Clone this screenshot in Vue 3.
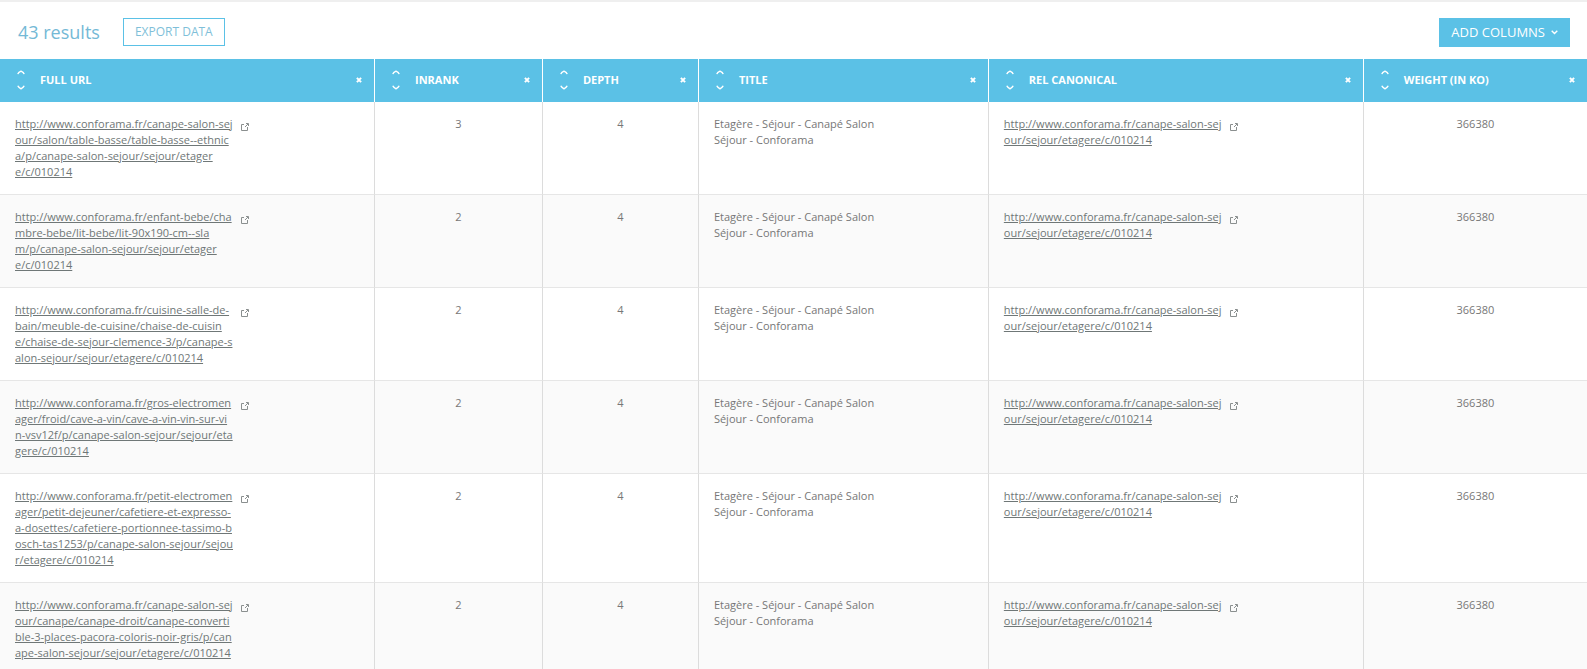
<script setup>
const columns = [
  { key: 'url', label: 'Full URL' },
  { key: 'inrank', label: 'InRank' },
  { key: 'depth', label: 'Depth' },
  { key: 'title', label: 'Title' },
  { key: 'canonical', label: 'Rel canonical' },
  { key: 'weight', label: 'Weight (in KO)' },
]

const canonical = ['http://www.conforama.fr/canape-salon-sej', 'our/sejour/etagere/c/010214']
const title = ['Etagère - Séjour - Canapé Salon', 'Séjour - Conforama']

const rows = [
  {
    inrank: 3,
    url: [
      'http://www.conforama.fr/canape-salon-sej',
      'our/salon/table-basse/table-basse--ethnic',
      'a/p/canape-salon-sejour/sejour/etager',
      'e/c/010214',
    ],
  },
  {
    inrank: 2,
    url: [
      'http://www.conforama.fr/enfant-bebe/cha',
      'mbre-bebe/lit-bebe/lit-90x190-cm--sla',
      'm/p/canape-salon-sejour/sejour/etager',
      'e/c/010214',
    ],
  },
  {
    inrank: 2,
    url: [
      'http://www.conforama.fr/cuisine-salle-de-',
      'bain/meuble-de-cuisine/chaise-de-cuisin',
      'e/chaise-de-sejour-clemence-3/p/canape-s',
      'alon-sejour/sejour/etagere/c/010214',
    ],
  },
  {
    inrank: 2,
    url: [
      'http://www.conforama.fr/gros-electromen',
      'ager/froid/cave-a-vin/cave-a-vin-vin-sur-vi',
      'n-vsv12f/p/canape-salon-sejour/sejour/eta',
      'gere/c/010214',
    ],
  },
  {
    inrank: 2,
    url: [
      'http://www.conforama.fr/petit-electromen',
      'ager/petit-dejeuner/cafetiere-et-expresso-',
      'a-dosettes/cafetiere-portionnee-tassimo-b',
      'osch-tas1253/p/canape-salon-sejour/sejou',
      'r/etagere/c/010214',
    ],
  },
  {
    inrank: 2,
    url: [
      'http://www.conforama.fr/canape-salon-sej',
      'our/canape/canape-droit/canape-converti',
      'ble-3-places-pacora-coloris-noir-gris/p/can',
      'ape-salon-sejour/sejour/etagere/c/010214',
    ],
  },
].map((row) => ({ ...row, depth: 4, title, canonical, weight: 366380 }))
</script>

<template>
  <main class="page">
    <header class="toolbar">
      <h1 class="count">43 results</h1>
      <button type="button" class="btn export">EXPORT DATA</button>
      <button type="button" class="btn add">
        ADD COLUMNS
        <svg width="7" height="5" viewBox="0 0 7 5" aria-hidden="true">
          <path d="M0.7 0.8 L3.5 3.6 L6.3 0.8" />
        </svg>
      </button>
    </header>

    <table class="results">
      <colgroup>
        <col v-for="c in columns" :key="c.key" :class="'col-' + c.key" />
      </colgroup>
      <thead>
        <tr>
          <th v-for="c in columns" :key="c.key" scope="col">
            <div class="head">
              <button type="button" class="icon-btn sort" :aria-label="'Sort by ' + c.label">
                <svg width="8" height="20" viewBox="0 0 8 20" aria-hidden="true">
                  <path d="M0.8 4.2 Q1.2 2.4 4 1.2 Q6.8 2.4 7.2 4.2" />
                  <path d="M0.8 15.8 Q1.4 17.4 4 18.8 Q6.6 17.4 7.2 15.8" />
                </svg>
              </button>
              <span class="label">{{ c.label }}</span>
              <button type="button" class="icon-btn close" :aria-label="'Remove ' + c.label">
                <svg width="6" height="6" viewBox="0 0 6 6" aria-hidden="true">
                  <path d="M0.9 0.9 L5.1 5.1 M5.1 0.9 L0.9 5.1" />
                </svg>
              </button>
            </div>
          </th>
        </tr>
      </thead>
      <tbody>
        <tr v-for="(row, i) in rows" :key="i">
          <td v-for="c in columns" :key="c.key" :class="'cell-' + c.key">
            <div v-if="c.key === 'url' || c.key === 'canonical'" class="link-cell">
              <a class="link" :href="row[c.key].join('')">
                <template v-for="(line, n) in row[c.key]" :key="n"><br v-if="n" />{{ line }}</template>
              </a>
              <a class="open" :href="row[c.key].join('')" target="_blank" aria-label="Open in a new tab">
                <svg width="10" height="10" viewBox="0 0 10 10" aria-hidden="true">
                  <path d="M4 2.5 H1.5 V8.5 H7.5 V5" />
                  <path d="M5 5 L8 2 M6 1.5 H8.5 V4" />
                </svg>
              </a>
            </div>
            <template v-else-if="c.key === 'title'">
              <template v-for="(line, n) in row.title" :key="n"><br v-if="n" />{{ line }}</template>
            </template>
            <template v-else>{{ row[c.key] }}</template>
          </td>
        </tr>
      </tbody>
    </table>
  </main>
</template>

<style>
body {
  margin: 0;
  background: #fff;
}
</style>

<style scoped>
.page {
  box-sizing: border-box;
  height: 100vh;
  overflow: hidden;
  border-top: 2px solid #efefef;
  font-family: "Open Sans", "Noto Sans", sans-serif;
  color: #777;
}

.toolbar {
  display: flex;
  align-items: center;
  box-sizing: border-box;
  height: 57px;
  padding: 3px 17px 0 18px;
}

.count {
  margin: 0 23px 0 0;
  font-size: 18px;
  font-weight: 400;
  line-height: 24px;
  color: #74b9d6;
}

.btn {
  box-sizing: border-box;
  height: 28px;
  border: 1px solid #5bc1e6;
  padding: 0 11px;
  font-family: inherit;
  font-size: 12px;
  line-height: 16px;
  cursor: pointer;
}

.export {
  background: #fff;
  color: #7fbfd9;
}

.add {
  display: flex;
  align-items: center;
  gap: 6px;
  height: 29px;
  margin-left: auto;
  background: #5bc1e6;
  color: #fff;
  font-size: 13px;
}

svg {
  display: block;
  fill: none;
  stroke: currentColor;
}

.add svg,
.sort svg {
  stroke-width: 1.4;
}

.results {
  width: 100%;
  table-layout: fixed;
  border-collapse: separate;
  border-spacing: 0;
  font-size: 11px;
  line-height: 16px;
}

.col-url,
.col-canonical {
  width: 23.63%;
}

.col-inrank {
  width: 10.58%;
}

.col-depth {
  width: 9.83%;
}

.col-title {
  width: 18.27%;
}

th {
  height: 43px;
  padding: 0;
  border-right: 1px solid #fff;
  background: #5bc1e6;
  color: #fff;
  font-weight: 700;
  text-align: left;
  text-transform: uppercase;
}

.head {
  display: flex;
  align-items: center;
  padding: 0 12px 1px 17px;
}

.label {
  flex: 1;
  margin-left: 15px;
}

.icon-btn {
  border: 0;
  padding: 0;
  background: none;
  color: #fff;
  cursor: pointer;
}

.close svg {
  stroke-width: 2;
}

td {
  padding: 14px 15px;
  border-right: 1px solid #dcdcdc;
  border-bottom: 1px solid #e6e6e6;
  vertical-align: top;
}

th:last-child,
td:last-child {
  border-right: 0;
}

tbody tr:nth-child(even) {
  background: #fafafa;
}

.cell-inrank,
.cell-depth,
.cell-weight {
  text-align: center;
}

.link-cell {
  display: flex;
  align-items: flex-start;
}

.link {
  width: 225px;
  color: #6f7777;
  white-space: nowrap;
}

.open {
  padding-top: 6px;
  color: #8a8f8f;
}
</style>
